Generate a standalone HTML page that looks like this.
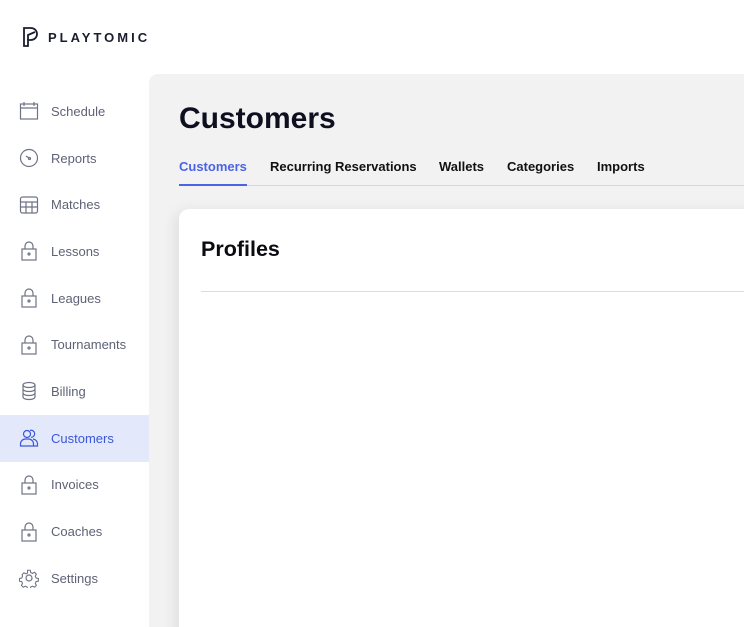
<!DOCTYPE html>
<html style="overflow:hidden;height:627px"><head><style>
body{margin:0;width:744px;height:627px;overflow:hidden;background:#fff;font-family:"Liberation Sans",sans-serif;position:relative}
.logo{position:absolute;left:22px;top:27px;display:flex;align-items:center}
.logo span{font-size:13px;font-weight:bold;letter-spacing:3px;color:#1a1d2e;margin-left:8px}
.nav{position:absolute;left:0;top:88px;width:149px}
.item{height:46.7px;display:flex;align-items:center;padding-left:19px;font-size:13px;color:#5e6275}
.item svg{width:20px;height:20px;margin-right:12px;fill:none;stroke:#6f7384;stroke-width:1.2}
.item.act{background:#e3e9fb;color:#3b57d9}
.item.act svg{stroke:#3b57d9}
.main{position:absolute;left:149px;top:74px;width:595px;height:553px;background:#f2f2f3;border-top-left-radius:9px;overflow:hidden}
h1{position:absolute;left:30px;top:28px;margin:0;font-size:30px;font-weight:bold;color:#0e1020}
.tabs{position:absolute;left:30px;top:85px;right:0;height:26px;border-bottom:1px solid #d8d8da;font-size:13px;font-weight:bold;color:#111}
.tabs span{position:absolute;top:0}
.card{position:absolute;left:30px;top:135px;width:600px;height:460px;background:#fff;border-radius:10px;box-shadow:-4px 2px 14px rgba(0,0,0,.08)}
.card h2{position:absolute;left:22px;top:28px;margin:0;font-size:21.5px;font-weight:bold;color:#0b0b12}
.card .hr{position:absolute;left:22px;right:0;top:82px;border-top:1px solid #dcdcdc}
</style></head><body>
<div class="logo"><svg width="18" height="20" viewBox="0 0 18 20" fill="none" stroke="#1a1d2e" stroke-width="1.8"><path d="M2 1h7a6 6 0 0 1 0 12H6v6H2z"/><path d="M6 13V8l7 -3"/></svg><span>PLAYTOMIC</span></div>
<div class="nav">
<div class="item"><svg viewBox="0 0 20 20"><rect x="1.5" y="3" width="17" height="15"/><path d="M1.5 7h17M5 1v4M15 1v4"/></svg>Schedule</div>
<div class="item"><svg viewBox="0 0 20 20"><circle cx="10" cy="10" r="8.5"/><path d="M7 8l3 2"/><circle cx="10.5" cy="10.5" r="1"/></svg>Reports</div>
<div class="item"><svg viewBox="0 0 20 20"><rect x="1.5" y="2" width="17" height="16" rx="2"/><path d="M1.5 7h17M1.5 12h17M7 7v11M13 7v11"/></svg>Matches</div>
<div class="item"><svg viewBox="0 0 20 20"><rect x="3" y="8" width="14" height="11"/><path d="M6 8V5a4 4 0 0 1 8 0v3"/><circle cx="10" cy="13" r="1"/></svg>Lessons</div>
<div class="item"><svg viewBox="0 0 20 20"><rect x="3" y="8" width="14" height="11"/><path d="M6 8V5a4 4 0 0 1 8 0v3"/><circle cx="10" cy="13" r="1"/></svg>Leagues</div>
<div class="item"><svg viewBox="0 0 20 20"><rect x="3" y="8" width="14" height="11"/><path d="M6 8V5a4 4 0 0 1 8 0v3"/><circle cx="10" cy="13" r="1"/></svg>Tournaments</div>
<div class="item"><svg viewBox="0 0 20 20"><ellipse cx="10" cy="4" rx="6" ry="2.5"/><path d="M4 4v12c0 1.4 2.7 2.5 6 2.5s6-1.1 6-2.5V4M4 8c0 1.4 2.7 2.5 6 2.5s6-1.1 6-2.5M4 12c0 1.4 2.7 2.5 6 2.5s6-1.1 6-2.5"/></svg>Billing</div>
<div class="item act"><svg viewBox="0 0 20 20"><circle cx="8" cy="6" r="3.5"/><path d="M1.5 18v-2a5 5 0 0 1 5-5h3a5 5 0 0 1 5 5v2z"/><path d="M11 2.5a3.5 3.5 0 1 1 1 6.8M14 11a5 5 0 0 1 4.5 5v2h-4"/></svg>Customers</div>
<div class="item"><svg viewBox="0 0 20 20"><rect x="3" y="8" width="14" height="11"/><path d="M6 8V5a4 4 0 0 1 8 0v3"/><circle cx="10" cy="13" r="1"/></svg>Invoices</div>
<div class="item"><svg viewBox="0 0 20 20"><rect x="3" y="8" width="14" height="11"/><path d="M6 8V5a4 4 0 0 1 8 0v3"/><circle cx="10" cy="13" r="1"/></svg>Coaches</div>
<div class="item"><svg viewBox="0 0 20 20"><circle cx="10" cy="10" r="3"/><path d="M8.5 1.5h3l.5 2.5 2 1 2.3-1.2 2 2-1.2 2.3.9 2 2.5.5v3l-2.5.5-.9 2 1.2 2.3-2 2-2.3-1.2-2 .9-.5 2.5h-3l-.5-2.5-2-.9-2.3 1.2-2-2 1.2-2.3-.9-2-2.5-.5v-3l2.5-.5.9-2L2.5 6.3l2-2L6.8 5.5l1.7-1z" transform="scale(.9) translate(1 1)"/></svg>Settings</div>
</div>
<div class="main">
<h1>Customers</h1>
<div class="tabs">
<span style="left:0;color:#4d63e6">Customers</span>
<span style="left:91px">Recurring Reservations</span>
<span style="left:260px">Wallets</span>
<span style="left:328px">Categories</span>
<span style="left:418px">Imports</span>
<div style="position:absolute;left:0;top:25px;width:68px;height:2px;background:#4d63e6"></div>
</div>
<div class="card"><h2>Profiles</h2><div class="hr"></div></div>
</div>
</body></html>
